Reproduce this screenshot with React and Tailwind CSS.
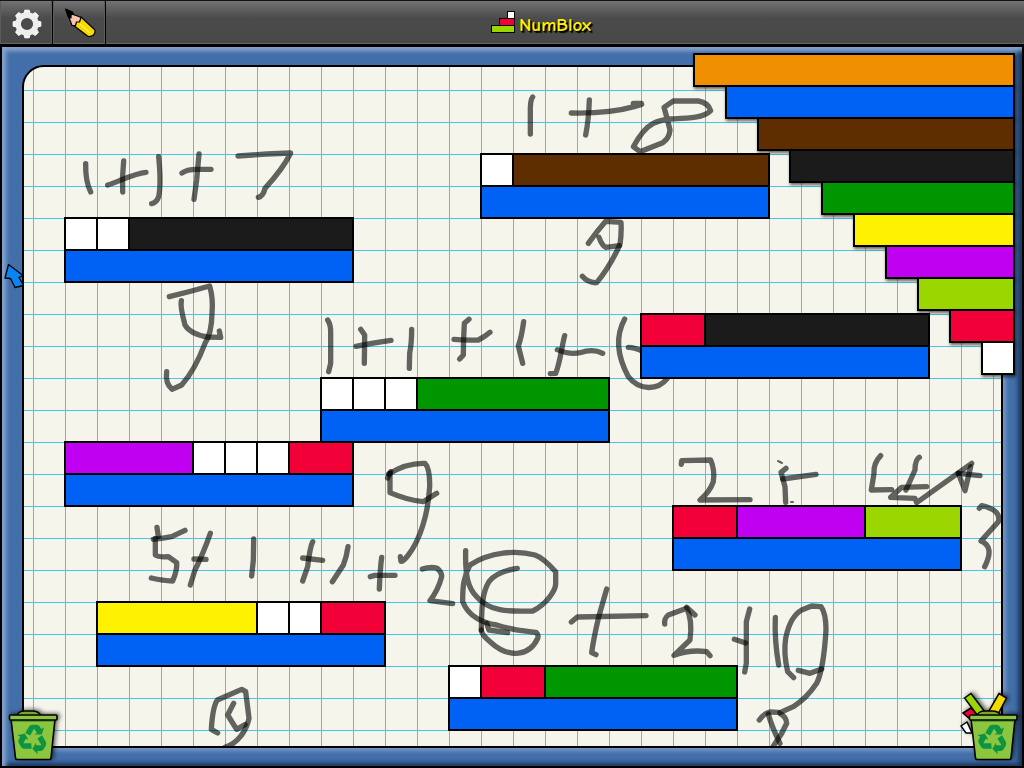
import React, { useState } from "react";

const UNIT = 32;

// rod fill by length in units
const RODS = {
  1: "bg-white",
  2: "bg-[#f20038]",
  3: "bg-[#9bd600]",
  4: "bg-[#c000f0]",
  5: "bg-[#fff200]",
  6: "bg-[#009600]",
  7: "bg-[#1b1b1b]",
  8: "bg-[#5f2e00]",
  9: "bg-[#0062f5]",
  10: "bg-[#f09000]",
};

const PALETTE = [10, 9, 8, 7, 6, 5, 4, 3, 2, 1];

// col / row are grid cells, rows are stacked top to bottom
const STACKS = [
  { col: 1, row: 4, rows: [[1, 1, 7], [9]] },
  { col: 14, row: 2, rows: [[1, 8], [9]] },
  { col: 9, row: 9, rows: [[1, 1, 1, 6], [9]] },
  { col: 19, row: 7, rows: [[2, 7], [9]] },
  { col: 1, row: 11, rows: [[4, 1, 1, 1, 2], [9]] },
  { col: 20, row: 13, rows: [[2, 4, 3], [9]] },
  { col: 2, row: 16, rows: [[5, 1, 1, 2], [9]] },
  { col: 13, row: 18, rows: [[1, 2, 6], [9]] },
];

// pencil strokes, drawn in thirds of a pixel from each note's origin
const NOTES = [
  {
    x: -24,
    y: -67,
    strokes: [
      "M257 491Q256 545 272 576",
      "M371 483Q366 530 368 576",
      "M323 555C350 548 400 520 438 517",
      "M476 470C480 510 482 560 476 590Q470 608 455 611",
      "M597 462L590 540L582 598",
      "M546 519Q560 508 590 508L633 508",
      "M714 468L800 462L872 459Q850 505 795 565Q790 588 775 592",
    ],
  },
  {
    x: 416,
    y: -67,
    strokes: [
      "M278 291Q270 300 271 340L271 402",
      "M448 300Q446 360 437 405",
      "M394 339C450 340 530 335 582 320L605 313M580 310L604 310",
      "M690 357C740 355 790 355 812 332Q805 308 775 303L700 303L672 322Q680 350 690 390Q688 415 668 428L600 455L580 440Q610 385 640 370Q660 360 690 357",
      "M445 730Q470 695 497 664L543 667Q545 700 540 733Q510 800 470 848Q445 850 427 829",
      "M477 712Q487 738 497 742L538 737",
    ],
  },
  {
    x: 106,
    y: 203,
    strokes: [
      "M118 80Q180 65 239 48Q250 85 246 130Q245 190 225 220Q195 300 155 345L126 358Q105 340 110 305",
      "M154 92Q150 110 165 165Q180 192 232 201L272 202L268 183",
    ],
  },
  {
    x: 286,
    y: 233,
    strokes: [
      "M53 60Q63 75 62 100L62 190L56 215",
      "M152 88L164 105L163 190",
      "M138 139Q180 130 243 121",
      "M305 88Q305 130 299 160L298 205",
      "M477 58L463 70Q460 120 460 165L449 177",
      "M432 118Q460 121 505 120Q525 110 540 97",
      "M641 65Q635 110 625 138L638 190",
      "M764 107C755 140 750 190 737 220L721 221",
      "M742 149Q780 165 810 158Q850 145 878 160",
      "M944 57C915 110 920 165 955 230C990 275 1045 270 1072 235",
      "M955 142Q975 142 1000 155",
    ],
  },
  {
    x: 106,
    y: 373,
    strokes: [
      "M773 114L782 95",
      "M776 102Q830 68 885 70Q900 85 899 140C895 220 870 300 835 345Q820 365 813 364L811 350",
      "M780 100L780 158Q830 180 880 185L920 160",
      "M81 262L85 290",
      "M70 298Q100 295 125 290L165 271",
      "M76 295L76 345Q85 352 115 350L140 368Q142 390 128 423Q100 422 64 414",
      "M241 280Q220 340 195 390L181 435",
      "M192 357L228 358",
      "M371 297L370 360L365 408",
      "M548 305Q540 320 533 380L518 423",
      "M518 354L578 361",
      "M654 320Q650 350 640 375L607 425",
      "M755 352Q750 390 748 447",
      "M721 410L735 406L795 406",
      "M877 387Q900 380 920 384Q935 395 935 410Q925 450 900 482L968 491",
    ],
  },
  {
    x: 416,
    y: 463,
    strokes: [
      "M77 62C75 140 85 175 110 200C150 245 200 245 278 243C320 222 348 180 347 160L347 125C320 95 300 80 285 75C230 60 150 65 90 105C70 140 68 170 68 215C85 260 130 280 170 285C220 300 240 302 288 307Q297 315 293 325C270 375 210 390 150 335Q125 315 124 300",
      "M232 115Q170 125 147 155C125 190 125 240 124 300",
      "M140 280L147 300L203 308",
      "M500 177L475 265Q460 330 455 368L468 374",
      "M394 276L412 261L618 257",
      "M674 282Q672 265 685 255L740 235Q758 270 750 330L702 376Q750 358 800 365L810 377",
      "M740 232L765 255",
      "M883 328L917 339",
      "M929 237L919 275L919 400L914 426",
      "M1006 262Q1003 330 1016 405",
      "M1061 443L1043 425Q1030 370 1037 325Q1050 260 1085 240L1115 228L1143 230Q1158 250 1158 300C1155 350 1150 420 1130 460Q1100 505 1060 530L1020 548",
      "M1075 421L1110 430L1145 417",
      "M958 570Q972 550 990 546L1015 547Q1040 560 1040 580Q1025 615 1000 648",
      "M985 552Q995 590 1020 640",
    ],
  },
  {
    x: 626,
    y: 373,
    strokes: [
      "M94 73L95 62L182 60Q195 90 190 125Q180 155 150 180L300 179",
      "M408 85L393 97L405 140L407 187",
      "M398 117L498 103",
      "M692 47Q670 70 672 100L664 150L725 149",
      "M808 52Q795 60 795 90L768 150",
      "M830 140L755 142L722 172L795 175L800 188L965 70",
      "M925 100L990 107",
      "M925 100L945 152L962 80",
      "M988 205L995 197Q1055 210 1045 245L993 303Q1035 320 1004 380",
    ],
  },
  {
    x: -24,
    y: 573,
    strokes: [
      "M653 279L634 268Q638 200 652 180L725 148L737 155L747 235C740 270 715 310 675 322",
      "M701 190L683 225Q705 260 710 268L735 254",
    ],
  },
];

function GearIcon() {
  return (
    <svg className="size-8" viewBox="0 0 32 32" aria-hidden="true">
      <defs>
        <linearGradient id="gear" x1="0" y1="0" x2="0" y2="1">
          <stop offset="0" stopColor="#fff" />
          <stop offset="1" stopColor="#dcdcdc" />
        </linearGradient>
      </defs>
      {/* eight teeth round a ring */}
      <g fill="url(#gear)" stroke="url(#gear)" strokeLinejoin="round">
        {[0, 45, 90, 135, 180, 225, 270, 315].map((a) => (
          <path key={a} d="M12.6 7L13.8 2.2H18.2L19.4 7Z" transform={`rotate(${a} 16 16)`} />
        ))}
      </g>
      <circle cx="16" cy="16" r="8.9" fill="none" stroke="#eeeeee" strokeWidth="5.6" />
    </svg>
  );
}

function PencilIcon() {
  return (
    <svg className="size-8" viewBox="0 0 32 32" aria-hidden="true">
      <g stroke="#000" strokeWidth="1.2" strokeLinejoin="round">
        <path d="M9 17L17 9L30.500 21.500Q32 24 29.500 27Q26 29.500 23.500 28Z" fill="#f8d800" />
        <path d="M3 4.500L13.500 8L17 9.500L15.500 14L12.500 14L11.500 17.500L8 17.500Z" fill="#f6c3ac" />
        <path d="M1.500 1L8.500 4L9.500 6L7 7L7 10L4.500 9Z" fill="#000" />
      </g>
      <path d="M16 16L26 25" stroke="#fff04a" strokeWidth="1.5" />
    </svg>
  );
}

function Logo() {
  return (
    <svg className="h-6 w-6" viewBox="0 0 24 24" aria-hidden="true">
      <g stroke="#000">
        <rect x="16.500" y="2.500" width="7" height="7" fill="#fff" />
        <rect x="8.500" y="9.500" width="15" height="7" fill="#f20038" />
        <rect x=".5" y="16.500" width="23" height="7" fill="#9bd600" />
      </g>
    </svg>
  );
}

function Bin({ full, label }) {
  return (
    <button type="button" aria-label={label} className="block h-[72px] w-[60px]">
      <svg
        className="h-full w-full overflow-visible drop-shadow-[2px_-1px_2px_rgba(0,0,0,0.6)]"
        viewBox="0 0 60 72"
        aria-hidden="true"
      >
        {full && (
          <g stroke="#000" strokeWidth="1.500" transform="translate(-2 -1)">
            <path d="M4 24L10 20L15 31L9 31Z" fill="#fff" transform="translate(-1 9)" />
            <path d="M5 19L13 14L22 24L13 26Z" fill="#f20038" transform="translate(0 1)" />
            <path d="M6.500 5L13 .500L27 19L27 23H20Z" fill="#9bd600" />
            <path d="M41 .500L48.500 5L39 23H28Z" fill="#f5d800" />
          </g>
        )}
        <path d="M17 22Q18 17 25 17H32Q39 17 41 22Z" fill="#7aa82e" stroke="#000" strokeWidth="1.400" />
        <path d="M11 25H55L51 64Q51 65.500 49 65.500H17.500Q15.500 65.500 15.500 64Z" fill="#8cc63f" stroke="#000" strokeWidth="1.600" />
        <path d="M12 26H54V28H12Z" fill="#5b9e28" />
        <rect x="9.500" y="21" width="47.500" height="5" rx="1" fill="#8cc63f" stroke="#000" strokeWidth="1.600" />
        {/* recycling arrows */}
        <g fill="#0b9444">
          {[0, 120, 240].map((a) => (
            <path
              key={a}
              d="M-7 -5.500L-3.500 -11.500Q-2.500 -13 -.5 -13H3.500Q5 -13 6 -11.500L7.500 -9L10 -10.500L8 -4H1.500L3.500 -5.500L1 -9.500L-2.500 -3.200Z"
              transform={`translate(33 45) rotate(${a}) scale(1.1)`}
            />
          ))}
        </g>
      </svg>
    </button>
  );
}

function Rod({ size, className = "" }) {
  return (
    <div
      className={`h-[34px] shrink-0 border-2 border-black ${RODS[size]} ${className}`}
      style={{ width: size * UNIT + 2 }}
    />
  );
}

function Stack({ col, row, rows }) {
  return (
    <div className="absolute" style={{ left: 8 + col * UNIT, top: 22 + row * UNIT }}>
      {rows.map((rods, i) => (
        <div key={i} className="-mb-0.5 flex">
          {rods.map((size, j) => (
            <Rod key={j} size={size} className="-mr-0.5" />
          ))}
        </div>
      ))}
    </div>
  );
}

function Ink() {
  return (
    <svg className="absolute inset-0 h-full w-full" aria-hidden="true">
      <g fill="none" stroke="#000" strokeOpacity="0.6" strokeWidth="16" strokeLinecap="round" strokeLinejoin="round">
        {NOTES.map((note, i) => (
          <g key={i} transform={`translate(${note.x} ${note.y}) scale(${1 / 3})`}>
            {note.strokes.map((d) => (
              <path key={d} d={d} />
            ))}
          </g>
        ))}
        {/* faint specks left by the pencil */}
        <path d="M754 394L758 396M767 435L769 435" strokeWidth="2" />
      </g>
    </svg>
  );
}

const toolClass =
  "flex w-[53px] items-center justify-center border-r border-black pt-0.5 pl-0.5 shadow-[inset_-1px_0_0_#5c5c5c,inset_1px_0_0_#5c5c5c]";

export default function App() {
  const [drawing, setDrawing] = useState(false);

  return (
    <div className="flex min-h-screen flex-col bg-black">
      <header className="flex h-11 border-t border-[#15101c] bg-linear-to-b from-[#727272] via-[#4b4b4b] via-40% to-[#484848] shadow-[inset_0_-1px_0_#666]">
        <button type="button" aria-label="Settings" className={toolClass}>
          <GearIcon />
        </button>
        <button
          type="button"
          aria-label="Pencil"
          aria-pressed={drawing}
          onClick={() => setDrawing(!drawing)}
          className={toolClass}
        >
          <PencilIcon />
        </button>
        <div className="flex flex-1 items-center justify-center gap-1 pr-12 pb-1">
          <Logo />
          <h1 className="pt-2 font-['Comic_Sans_MS','Comic_Neue',Lato,sans-serif] text-[19px] leading-6 font-bold text-[#fff200] [text-shadow:1px_1px_0_#000,2px_2px_1px_#000]">
            NumBlox
          </h1>
        </div>
      </header>

      <main className="relative mx-0.5 mt-[3px] mb-0.5 flex flex-1 bg-[#426fa9] pt-[18px] pr-[19px] pb-[18px] pl-5 shadow-[inset_4px_4px_4px_#86a4cd,inset_-4px_-3px_4px_#1c355c]">
        <section
          aria-label="Board"
          className="relative min-h-[680px] flex-1 overflow-hidden rounded-tl-[22px] border-2 border-black bg-[#f5f5ec] bg-[linear-gradient(#48c6e8_0_1px,transparent_1px_32px),linear-gradient(to_right,#48c6e8_0_1px,transparent_1px_32px)] bg-[size:32px_32px] bg-[position:9px_23px] shadow-[3px_3px_4px_#7597c8]"
        >
          <Ink />
          {STACKS.map((s) => (
            <Stack key={`${s.col}-${s.row}`} {...s} />
          ))}
        </section>

        {/* rod palette, hangs over the board's corner */}
        <div className="absolute top-1.5 right-[7px] flex flex-col items-end">
          {PALETTE.map((size) => (
            <button
              key={size}
              type="button"
              aria-label={`Rod ${size}`}
              className="-mb-0.5 block shadow-[1px_2px_3px_rgba(0,0,0,0.6)]"
            >
              <Rod size={size} />
            </button>
          ))}
        </div>

        <svg className="absolute top-[216px] left-0.5 h-7 w-6" viewBox="0 0 24 28" aria-hidden="true">
          <path
            d="M4.500 1.500L19 12.500L15 14.500L19.500 22.500L11 24.500L6.500 15.500L1 15Z"
            fill="#0b84f3"
            stroke="#000"
            strokeWidth="1.300"
            strokeLinejoin="round"
          />
        </svg>

        <div className="absolute bottom-0 -left-0.5">
          <Bin label="Recycle rods" />
        </div>
        <div className="absolute right-0.5 bottom-0">
          <Bin full label="Clear board" />
        </div>
      </main>
    </div>
  );
}
